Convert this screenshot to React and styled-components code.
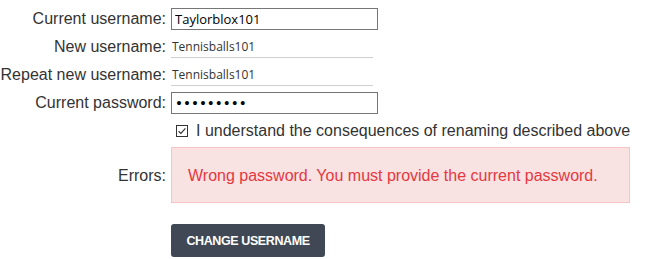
import React from "react";
import styled, { createGlobalStyle } from "styled-components";

const Global = createGlobalStyle`
  html, body { margin: 0; padding: 0; background: #fff; }
  body { font-family: "Liberation Sans", Arial, sans-serif; }
`;

const Form = styled.form`
  display: grid;
  grid-template-columns: 166px 460px;
  column-gap: 5px;
  row-gap: 6px;
  padding-top: 8px;
  align-items: center;
`;

const Label = styled.label`
  justify-self: end;
  font-size: 16px;
  color: #333;
  line-height: 22px;
  white-space: nowrap;
`;

const BoxInput = styled.input`
  box-sizing: border-box;
  display: block;
  width: 207px;
  height: 22px;
  border: 1px solid #767676;
  padding: 0 3px;
  font-family: "Open Sans", "Noto Sans", sans-serif;
  font-size: 13px;
  color: #000;
  outline: none;
  margin: 0;
`;

const PasswordInput = styled(BoxInput)`
  font-family: "DejaVu Sans", sans-serif;
  font-size: 13.5px;
  letter-spacing: 0px;
`;

const LineInput = styled.input`
  box-sizing: border-box;
  display: block;
  width: 202px;
  height: 22px;
  border: none;
  border-bottom: 1px solid #cfcfcf;
  padding: 0 1px;
  font-family: "Open Sans", "Noto Sans", sans-serif;
  font-size: 12px;
  color: #333;
  background: transparent;
  outline: none;
  margin: 0;
`;

const CheckRow = styled.div`
  grid-column: 2;
  display: flex;
  align-items: center;
  gap: 8px;
  padding-left: 5px;
  height: 21px;
  font-size: 16px;
  color: #333;
  white-space: nowrap;
`;

const ErrorBox = styled.div`
  box-sizing: border-box;
  width: 459px;
  height: 56px;
  background: #f9e2e2;
  border: 1px solid #f5c4c4;
  display: flex;
  align-items: center;
  padding-left: 16px;
  padding-top: 2px;
  font-size: 16px;
  color: #e5383f;
  white-space: nowrap;
`;

const ErrorLabel = styled(Label)`
  padding-top: 2px;
`;

const ButtonCell = styled.div`
  grid-column: 2;
  padding-top: 15px;
`;

const Button = styled.button`
  box-sizing: border-box;
  display: block;
  width: 154px;
  height: 33px;
  background: #3f4854;
  color: #fff;
  border: none;
  border-radius: 3px;
  font-family: "Liberation Sans", Arial, sans-serif;
  font-weight: bold;
  font-size: 12.5px;
  letter-spacing: -0.4px;
  text-transform: uppercase;
  padding: 0;
  cursor: pointer;
`;

const CheckIcon = () => (
  <svg width="12" height="12" viewBox="0 0 12 12" style={{ display: "block" }}>
    <rect x="0.5" y="0.5" width="11" height="11" fill="#fff" stroke="#333" />
    <path d="M2.6 6.2 L4.9 8.4 L9.4 3.4" fill="none" stroke="#333" strokeWidth="1.2" />
  </svg>
);

export default function App() {
  return (
    <>
      <Global />
      <Form onSubmit={(e) => e.preventDefault()}>
        <Label>Current username:</Label>
        <div><BoxInput defaultValue="Taylorblox101" /></div>
        <Label>New username:</Label>
        <div><LineInput defaultValue="Tennisballs101" /></div>
        <Label>Repeat new username:</Label>
        <div><LineInput defaultValue="Tennisballs101" /></div>
        <Label>Current password:</Label>
        <div><PasswordInput type="password" defaultValue="abcdefghi" /></div>
        <CheckRow>
          <CheckIcon />
          <span>I understand the consequences of renaming described above</span>
        </CheckRow>
        <ErrorLabel>Errors:</ErrorLabel>
        <ErrorBox>Wrong password. You must provide the current password.</ErrorBox>
        <ButtonCell>
          <Button type="submit">Change username</Button>
        </ButtonCell>
      </Form>
    </>
  );
}
